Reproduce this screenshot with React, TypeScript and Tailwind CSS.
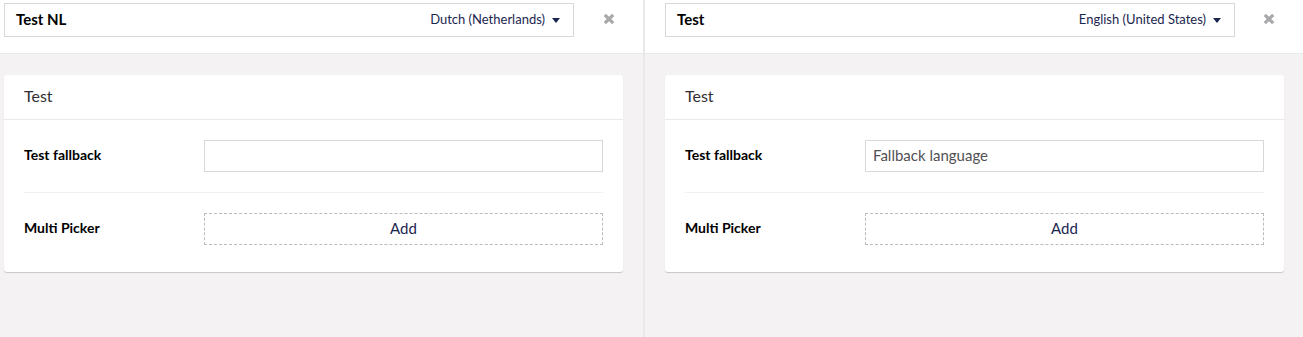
import React from "react";

function Caret() {
  return (
    <svg width="8" height="5" viewBox="0 0 8 5" className="ml-[7px] mt-[2px]">
      <path d="M0 0 L8 0 L4 5 Z" fill="#1b264f" />
    </svg>
  );
}

function CloseX() {
  return (
    <svg width="12" height="12" viewBox="0 0 12 12">
      <path d="M1.8 1.8 L10.2 10.2 M10.2 1.8 L1.8 10.2" stroke="#a9a9ab" strokeWidth="3.2" strokeLinecap="butt" />
    </svg>
  );
}

function Pane({
  name,
  lang,
  value,
  padLeft,
  width,
}: {
  name: string;
  lang: string;
  value: string;
  padLeft: string;
  width: string;
}) {
  return (
    <div className={`flex flex-col ${width} h-full`}>
      <div className={`h-[54px] bg-white border-b border-[#e9e9eb] flex items-start pt-[3px] ${padLeft}`}>
        <div className="w-[570px] h-[34px] border border-[#d8d7d9] flex items-center pl-[11px] pr-[13px] pb-[2px]">
          <span className="text-[15px] font-bold text-[#000] leading-none">{name}</span>
          <span className="ml-auto text-[13px] text-[#1b264f] leading-none">{lang}</span>
          <Caret />
        </div>
        <div className="flex-1 flex justify-center pt-[10px]">
          <CloseX />
        </div>
      </div>
      <div className={`flex-1 bg-[#f4f2f3] pt-[21px] ${padLeft}`}>
        <div className="w-[619px] bg-white rounded-[3px] shadow-[0_1px_1px_rgba(0,0,0,0.18)]">
          <div className="h-[45px] border-b border-[#e9e9eb] flex items-center px-[20px] pb-[2px]">
            <span className="text-[16px] text-[#303033]">Test</span>
          </div>
          <div className="px-[20px] pt-[20px] pb-[27px]">
            <div className="flex items-center pb-[20px] border-b border-[#f0f0f0]">
              <div className="w-[180px] text-[14px] font-bold text-[#000] pb-[4px]">Test fallback</div>
              <div className="w-[399px] h-[32px] border border-[#d8d7d9] flex items-center px-[7px] pb-[2px] text-[15px] text-[#515054]">
                {value}
              </div>
            </div>
            <div className="flex items-center pt-[20px]">
              <div className="w-[180px] text-[14px] font-bold text-[#000] pb-[4px]">Multi Picker</div>
              <div className="w-[399px] h-[32px] border border-dashed border-[#bbbbbb] flex items-center justify-center pb-[2px] text-[15px] text-[#1b264f]">
                Add
              </div>
            </div>
          </div>
        </div>
      </div>
    </div>
  );
}

export default function App() {
  return (
    <div
      className="w-[1303px] h-[337px] flex overflow-hidden bg-[#f4f2f3]"
      style={{ fontFamily: "Lato, 'Noto Sans', sans-serif" }}
    >
      <Pane name="Test NL" lang="Dutch (Netherlands)" value="" padLeft="pl-[4px]" width="w-[643px]" />
      <div className="w-[2px] h-full bg-[#e9e9eb]" />
      <Pane name="Test" lang="English (United States)" value="Fallback language" padLeft="pl-[20px]" width="w-[658px]" />
    </div>
  );
}
